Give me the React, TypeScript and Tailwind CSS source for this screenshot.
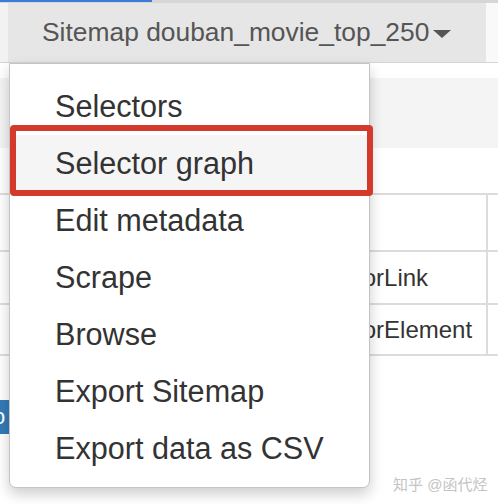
import React from "react";

const items = [
  "Selectors",
  "Selector graph",
  "Edit metadata",
  "Scrape",
  "Browse",
  "Export Sitemap",
  "Export data as CSV",
];

export default function App() {
  return (
    <div
      className="relative w-[498px] h-[504px] overflow-hidden bg-white"
      style={{ fontFamily: '"Liberation Sans", Arial, sans-serif' }}
    >
      {/* top progress / border */}
      <div className="flex h-[3px] bg-[#d6d6d6]">
        <div className="w-[152px] h-[2px] bg-[#3d7bd6]" />
      </div>
      {/* navbar */}
      <div className="flex h-[60px] border-b border-[#d4d4d4]">
        <div className="w-[8px] bg-[#f2f2f2]" />
        <div className="w-[478px] bg-[#e6e6e6] flex items-center pl-[34px] text-[26.4px] text-[#555] leading-none">
          <span>Sitemap douban_movie_top_250</span>
          <span className="ml-[4px] mt-[2px] w-0 h-0 border-l-[9px] border-r-[9px] border-t-[8px] border-l-transparent border-r-transparent border-t-[#555]" />
        </div>
        <div className="flex-1 bg-[#f9f9f9]" />
      </div>
      {/* page content behind menu */}
      <div className="h-[15px] bg-white" />
      <div className="h-[70px] bg-[#f4f4f4]" />
      <div className="h-[45px] bg-white" />
      <div className="border-t-2 border-[#dcdcdc]">
        <div className="grid grid-cols-[488px_1fr] h-[57px] border-b-2 border-[#dcdcdc]">
          <div className="border-r-2 border-[#dcdcdc]" />
          <div />
        </div>
        <div className="grid grid-cols-[488px_1fr] h-[53px] border-b-2 border-[#dcdcdc]">
          <div className="border-r-2 border-[#dcdcdc] flex items-center pl-[296px] text-[24px] text-[#333]">
            SelectorLink
          </div>
          <div />
        </div>
        <div className="grid grid-cols-[488px_1fr] h-[51px] border-b-2 border-[#dcdcdc]">
          <div className="border-r-2 border-[#dcdcdc] flex items-center pl-[296px] text-[24px] text-[#333]">
            SelectorElement
          </div>
          <div />
        </div>
      </div>
      <div className="h-[44px]" />
      <div className="w-[9px] h-[34px] bg-[#337ab7] overflow-hidden flex items-center">
        <span className="text-white text-[22px] ml-[-7px] leading-none">o</span>
      </div>

      {/* watermark */}
      <div
        className="absolute left-[393px] top-[474px] text-[15px] text-[#c4c4c4] whitespace-nowrap"
        style={{ fontFamily: '"Liberation Sans", "Noto Sans CJK SC", sans-serif' }}
      >
        知乎 @函代烃
      </div>

      {/* dropdown menu */}
      <div className="absolute left-[9px] top-[63px] w-[361px] h-[425px] bg-white border border-[#c4c4c4] rounded-b-[7px] shadow-[0_6px_14px_rgba(0,0,0,0.2)] pt-[14px]">
        {items.map((t, i) => (
          <div
            key={t}
            className={`h-[57px] leading-[57px] pl-[45px] text-[30.6px] text-[#333] whitespace-nowrap ${
              i === 1 ? "bg-[#f5f5f5]" : ""
            }`}
          >
            {t}
          </div>
        ))}
      </div>

      {/* annotation box */}
      <div className="absolute left-[10px] top-[125px] w-[363px] h-[71px] border-[6px] border-[#d33a2b] rounded-[4px]" />
    </div>
  );
}
